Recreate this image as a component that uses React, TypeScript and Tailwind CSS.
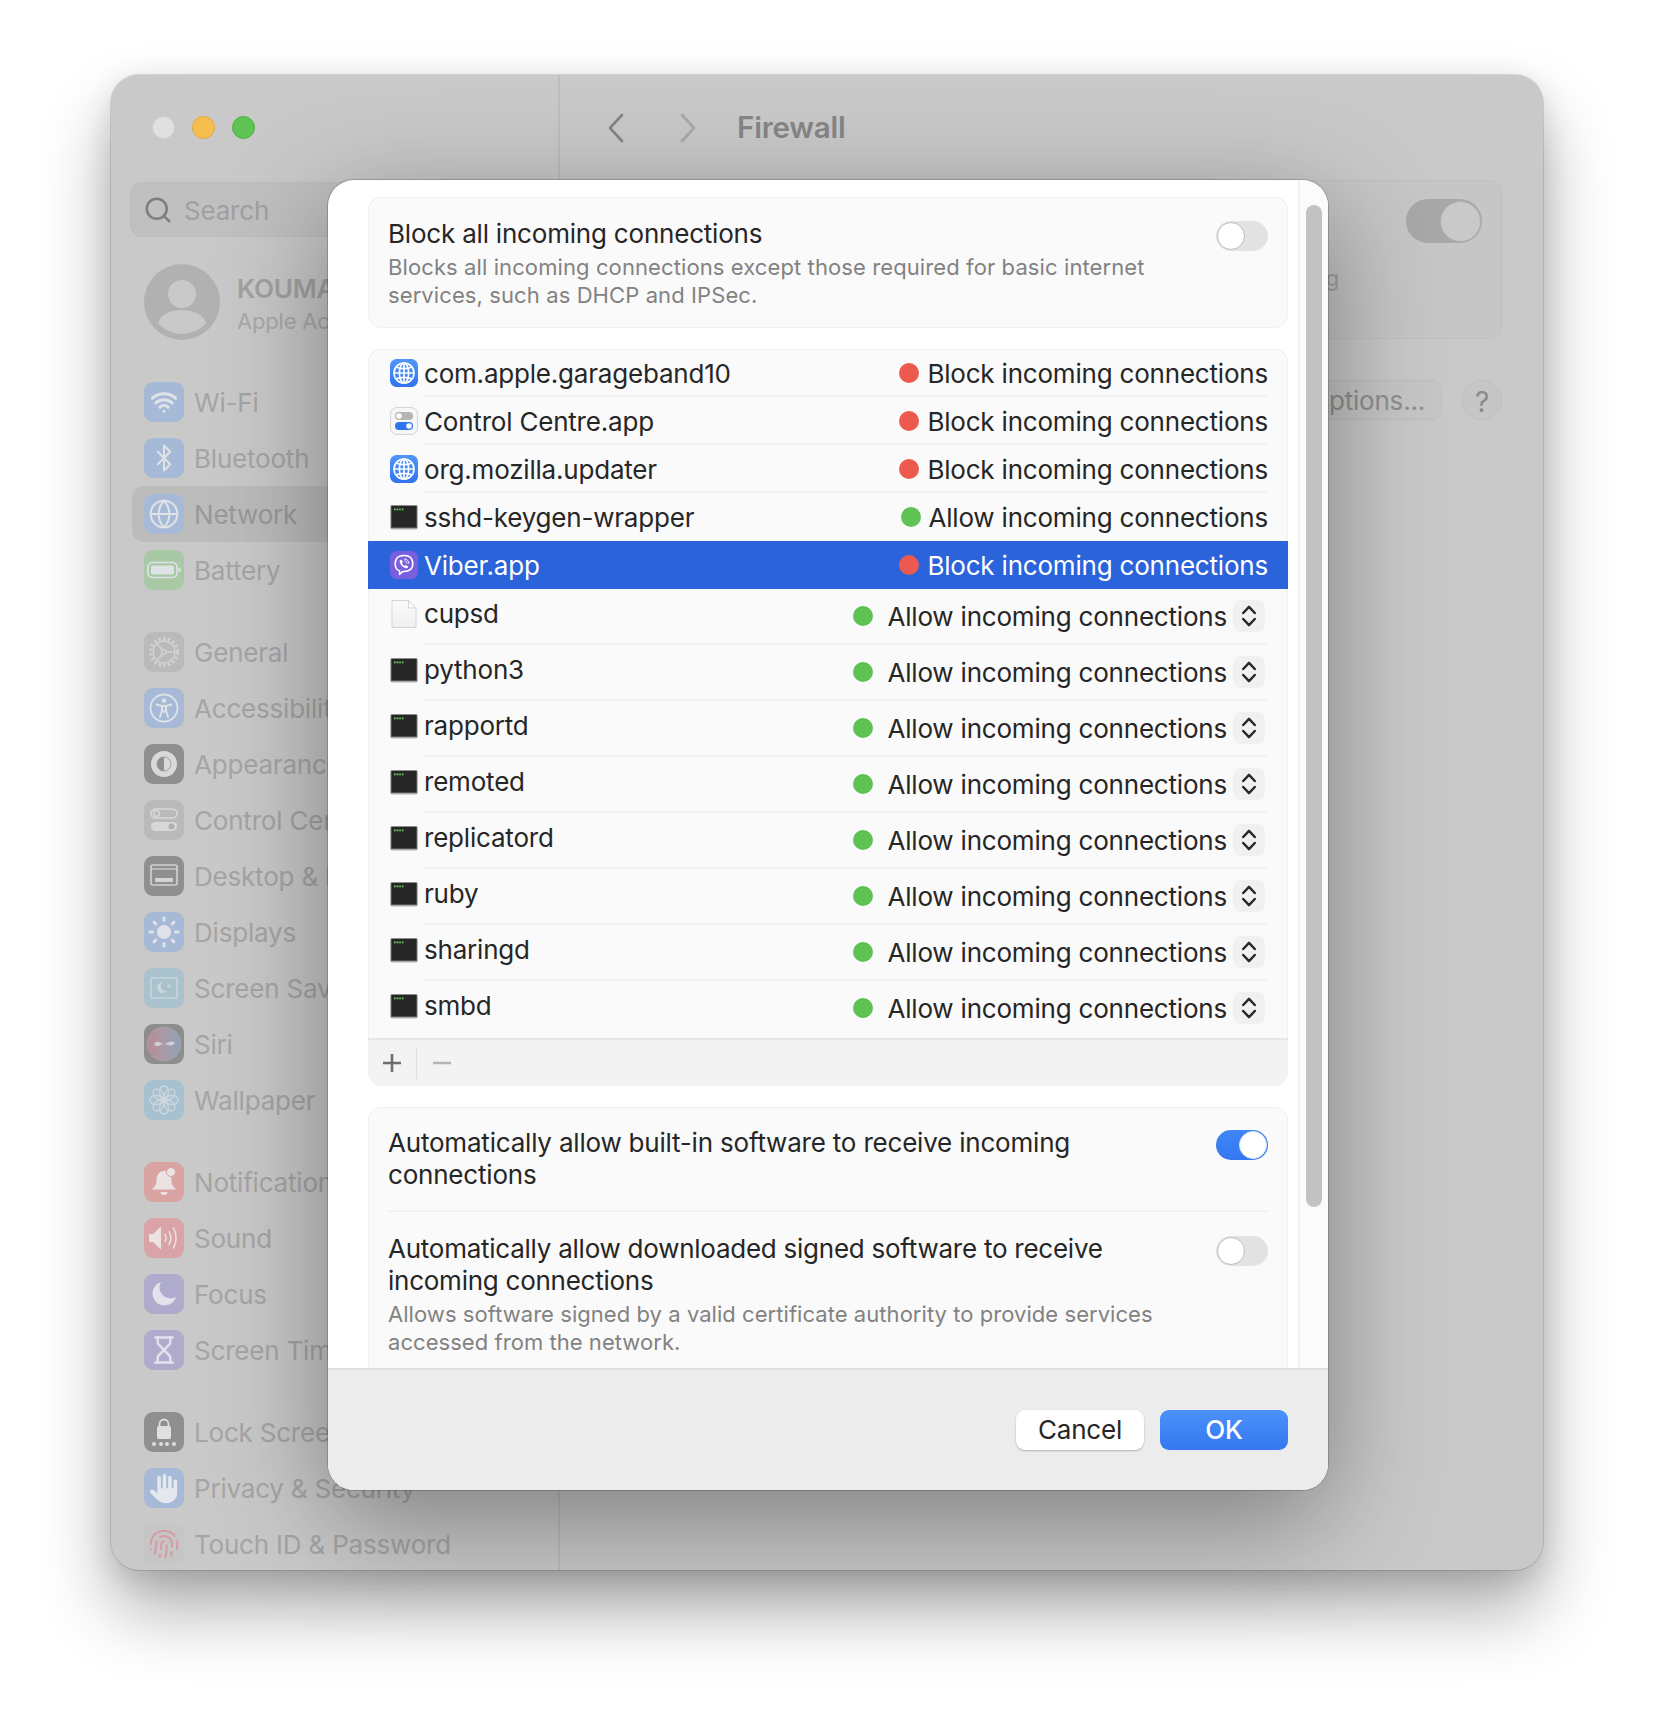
import React from 'react';
import { Bluetooth, Fingerprint, Globe, Hourglass, Search, Sun, Wifi } from 'lucide-react';
import { FaHand } from 'react-icons/fa6';

const AppGlobe: React.FC = () => (
  <svg width="28" height="28" viewBox="0 0 28 28">
    <defs>
      <linearGradient id="globe-bg" x1="0" y1="0" x2="0" y2="1">
        <stop offset="0" stopColor="#4f97f8" />
        <stop offset="1" stopColor="#2f74ee" />
      </linearGradient>
    </defs>
    <rect x="0" y="0" width="28" height="28" rx="6.5" fill="url(#globe-bg)" />
    <g fill="none" stroke="#fff" strokeWidth="1.700">
      <circle cx="14" cy="14" r="10" />
      <ellipse cx="14" cy="14" rx="4.600" ry="10" />
      <path d="M14 4v20" />
      <path d="M4 14h20" />
      <path d="M6 8c4 2.200 12 2.200 16 0" />
      <path d="M6 20c4-2.200 12-2.200 16 0" />
    </g>
  </svg>
);

const AppControl: React.FC = () => (
  <svg width="28" height="28" viewBox="0 0 28 28">
    <rect x="0.500" y="0.500" width="27" height="27" rx="6.500" fill="#f6f6f6" stroke="#d4d4d4" />
    <rect x="5" y="5" width="18" height="8" rx="4" fill="#b4b4b4" />
    <circle cx="9" cy="9" r="2.800" fill="#fff" />
    <rect x="5" y="15" width="18" height="8" rx="4" fill="#2f74ee" />
    <circle cx="19" cy="19" r="2.800" fill="#fff" />
  </svg>
);

const AppTerminal: React.FC = () => (
  <svg width="28" height="28" viewBox="0 0 28 28">
    <rect x="0.500" y="3" width="27" height="23.500" rx="1" fill="#b5b5b5" />
    <rect x="1" y="2.500" width="26" height="22.500" rx="0.500" fill="#262626" stroke="#8c8c8c" strokeWidth="0.800" />
    <rect x="4" y="5.500" width="1.600" height="1.800" fill="#6fd062" />
    <rect x="6.600" y="5.500" width="1.600" height="1.800" fill="#6fd062" />
    <rect x="9.200" y="5.500" width="1.600" height="1.800" fill="#6fd062" />
    <rect x="11.800" y="5.500" width="1.600" height="1.800" fill="#6fd062" />
  </svg>
);

const AppViber: React.FC = () => (
  <svg width="28" height="28" viewBox="0 0 28 28">
    <rect x="0" y="0" width="28" height="28" rx="6.5" fill="#7a5ee0" />
    <path d="M14 4.500c-5.600 0-8.800 2.400-8.800 8.200 0 4 1.500 6.200 4.400 7.300v3.400l3.300-3c6.600.3 9.900-2.400 9.900-7.700 0-5.800-3.200-8.200-8.800-8.200z" fill="none" stroke="#fff" strokeWidth="1.500" strokeLinejoin="round" />
    <path d="M10.600 8.800c-1 .5-1.200 1.500-.8 2.700 1 2.600 3 4.700 5.700 5.700 1.100.4 2.100 0 2.600-1 .2-.4 0-.7-.3-1l-1.500-1c-.4-.2-.7-.1-1 .2l-.5.6c-1.300-.6-2.300-1.600-2.900-2.900l.6-.5c.3-.3.4-.6.2-1l-1-1.500c-.2-.3-.6-.5-1.100-.3z" fill="#fff" />
    <path d="M14.500 8c2.500.1 4.300 1.900 4.400 4.500M14.800 10c1.300.1 2 .9 2.100 2.300" fill="none" stroke="#fff" strokeWidth="0.900" strokeLinecap="round" />
  </svg>
);

const AppDocument: React.FC = () => (
  <svg width="28" height="28" viewBox="0 0 28 28">
    <defs>
      <linearGradient id="doc-bg" x1="0" y1="0" x2="0" y2="1">
        <stop offset="0" stopColor="#fbfbfb" />
        <stop offset="1" stopColor="#efefef" />
      </linearGradient>
    </defs>
    <path d="M2 0.500h16.500L26 8v19.500H2z" fill="url(#doc-bg)" stroke="#d6d6d6" />
    <path d="M18.500 0.500V8H26z" fill="#ffffff" stroke="#d6d6d6" />
  </svg>
);

const Toggle: React.FC<{ on?: boolean }> = ({ on }) => (
  <div
    className={`w-[52px] h-[30px] rounded-full flex items-center p-px shrink-0 ${
      on ? 'justify-end bg-gradient-to-b from-[#3f86f7] to-[#3577f0]' : 'justify-start bg-[#e2e2e2]'
    }`}
  >
    <div className={`w-[28px] h-[28px] rounded-full bg-white ${on ? 'border border-[#d9e4f7]' : 'border border-[#bdbdbd]'}`} />
  </div>
);

const Stepper: React.FC = () => (
  <div className="w-[32px] h-[32px] rounded-lg bg-[#f0f0f0] flex items-center justify-center shrink-0">
    <svg width="16" height="24" viewBox="0 0 16 24" fill="none" stroke="#2a2a2a" strokeWidth="2.500" strokeLinecap="round" strokeLinejoin="round">
      <path d="M2.200 9 8 2.800 13.800 9" />
      <path d="M2.200 15 8 21.200 13.800 15" />
    </svg>
  </div>
);

const Dot: React.FC<{ tone: 'red' | 'green' }> = ({ tone }) => (
  <span className={`w-[20px] h-[20px] rounded-full shrink-0 ${tone === 'red' ? 'bg-[#ec5a4f]' : 'bg-[#5ec254]'}`} />
);

const topRows = [
  { name: 'com.apple.garageband10', icon: <AppGlobe />, allow: false },
  { name: 'Control Centre.app', icon: <AppControl />, allow: false },
  { name: 'org.mozilla.updater', icon: <AppGlobe />, allow: false },
  { name: 'sshd-keygen-wrapper', icon: <AppTerminal />, allow: true },
];

const pickerRows = ['cupsd', 'python3', 'rapportd', 'remoted', 'replicatord', 'ruby', 'sharingd', 'smbd'];

type SideItem = { label: string; bg: string; icon: React.ReactNode; active?: boolean };

const tint = '#dfe3e8';

const petals = [0, 45, 90, 135, 180, 225, 270, 315];

const sideGroups: SideItem[][] = [
  [
    { label: 'Wi-Fi', bg: 'bg-[#a6b9d6]', icon: <Wifi size={28} color={tint} strokeWidth={2.6} /> },
    { label: 'Bluetooth', bg: 'bg-[#a6b9d6]', icon: <Bluetooth size={30} color={tint} strokeWidth={1.6} /> },
    { label: 'Network', bg: 'bg-[#a6b9d6]', icon: <Globe size={32} color={tint} strokeWidth={1.5} />, active: true },
    {
      label: 'Battery', bg: 'bg-[#a9c9a6]', icon: (
        <svg width="34" height="18" viewBox="0 0 34 18" fill="none">
          <rect x="1" y="1.500" width="29" height="15" rx="4.500" stroke={tint} strokeWidth="1.600" />
          <rect x="4" y="4.500" width="23" height="9" rx="2" fill={tint} />
          <rect x="31.500" y="6.500" width="2" height="5" rx="1" fill={tint} />
        </svg>
      ),
    },
  ],
  [
    {
      label: 'General', bg: 'bg-[#bababa]', icon: (
        <svg width="32" height="32" viewBox="0 0 32 32" fill="none" stroke="#d2d2d2">
          <circle cx="16" cy="16" r="13.500" strokeWidth="3" strokeDasharray="2.400 2.400" />
          <circle cx="16" cy="16" r="11" strokeWidth="1.400" />
          <circle cx="16" cy="16" r="2.200" strokeWidth="1.400" />
          <path d="M14.500 14.500 9 7M18.300 16H27M14.500 17.500 9 25" strokeWidth="1.400" />
        </svg>
      ),
    },
    {
      label: 'Accessibility', bg: 'bg-[#a6b9d6]', icon: (
        <svg width="30" height="30" viewBox="0 0 30 30" fill="none" stroke={tint}>
          <circle cx="15" cy="15" r="13.500" strokeWidth="1.800" />
          <circle cx="15" cy="7.500" r="2.200" fill={tint} stroke="none" />
          <path d="M7.500 11.500 13 13v4.500L11 24M22.500 11.500 17 13v4.500L19 24M13 13h4M15 18v1" strokeWidth="2" strokeLinecap="round" strokeLinejoin="round" />
        </svg>
      ),
    },
    {
      label: 'Appearance', bg: 'bg-[#8f8f8f]', icon: (
        <svg width="28" height="28" viewBox="0 0 28 28">
          <circle cx="14" cy="14" r="13" fill="#d9d9d9" />
          <path d="M14 7a7 7 0 0 0 0 14z" fill="#8f8f8f" />
          <path d="M14 7a7 7 0 0 1 0 14z" fill="#d9d9d9" />
          <circle cx="14" cy="14" r="7" fill="none" stroke="#8f8f8f" strokeWidth="0.800" />
        </svg>
      ),
    },
    {
      label: 'Control Centre', bg: 'bg-[#bababa]', icon: (
        <svg width="28" height="26" viewBox="0 0 28 26" fill="none">
          <rect x="1" y="2" width="26" height="9" rx="4.500" stroke="#d8d8d8" strokeWidth="1.600" />
          <circle cx="6.500" cy="6.500" r="3" stroke="#d8d8d8" strokeWidth="1.400" />
          <rect x="1" y="15" width="26" height="9" rx="4.500" fill="#d8d8d8" />
          <circle cx="21.500" cy="19.500" r="3" fill="#b0b0b0" />
        </svg>
      ),
    },
    {
      label: 'Desktop & Dock', bg: 'bg-[#8f8f8f]', icon: (
        <svg width="28" height="24" viewBox="0 0 28 24" fill="none">
          <rect x="1" y="1" width="26" height="20" rx="2" stroke="#d2d2d2" strokeWidth="1.600" />
          <path d="M1 5h26" stroke="#d2d2d2" strokeWidth="1.200" />
          <rect x="5" y="14" width="18" height="4" fill="#d2d2d2" />
        </svg>
      ),
    },
    { label: 'Displays', bg: 'bg-[#a6b9d6]', icon: <Sun size={34} color={tint} fill={tint} strokeWidth={2} /> },
    {
      label: 'Screen Saver', bg: 'bg-[#a9c2cd]', icon: (
        <svg width="28" height="22" viewBox="0 0 28 22" fill="none">
          <rect x="1" y="1" width="26" height="20" stroke="#cdd7dc" strokeWidth="1.400" />
          <path d="M13 5a5.500 5.500 0 1 0 4 9 5 5 0 0 1-4-9z" fill="#cdd7dc" />
          <path d="M19 7v4M17 9h4" stroke="#cdd7dc" strokeWidth="1" />
        </svg>
      ),
    },
    {
      label: 'Siri', bg: 'bg-[#8d8d8d]', icon: (
        <svg width="36" height="36" viewBox="0 0 36 36">
          <defs>
            <linearGradient id="siri-glow" x1="0" y1="0" x2="1" y2="0">
              <stop offset="0" stopColor="#b98a98" />
              <stop offset="0.500" stopColor="#a99aa8" />
              <stop offset="1" stopColor="#8ea2b8" />
            </linearGradient>
          </defs>
          <circle cx="18" cy="18" r="17" fill="url(#siri-glow)" stroke="#a5a5a5" strokeWidth="0.800" />
          <path d="M8 18c4-5 7 0 10 0s6-5 11-1c-4 5-7 1-11 1s-6 5-10 0z" fill="#d9dde2" opacity="0.800" />
        </svg>
      ),
    },
    {
      label: 'Wallpaper', bg: 'bg-[#a8c1d0]', icon: (
        <svg width="32" height="32" viewBox="0 0 32 32" fill="none" stroke="#cdd8de" strokeWidth="1.300">
          {petals.map((deg) => (
            <ellipse key={deg} cx="16" cy="8" rx="4.500" ry="6" transform={`rotate(${deg} 16 16)`} />
          ))}
          <circle cx="16" cy="16" r="2" fill="#cdd8de" />
        </svg>
      ),
    },
  ],
  [
    {
      label: 'Notifications', bg: 'bg-[#d9a3a2]', icon: (
        <svg width="32" height="32" viewBox="0 0 32 32">
          <path d="M16 5c-5 0-7.500 4-7.500 9 0 4.500-1.500 6.500-4 8.500v1h23v-1c-2.500-2-4-4-4-8.500 0-5-2.500-9-7.500-9z" fill="#ece2e2" />
          <path d="M12.500 26a3.500 3 0 0 0 7 0z" fill="#ece2e2" />
          <circle cx="23" cy="6" r="4.500" fill="#ece2e2" stroke="#d9a3a2" strokeWidth="1" />
        </svg>
      ),
    },
    {
      label: 'Sound', bg: 'bg-[#d9a3a8]', icon: (
        <svg width="32" height="26" viewBox="0 0 32 26" fill="none" stroke="#ece2e2" strokeWidth="1.500" strokeLinecap="round">
          <path d="M1 9h4l8-7.500v23L5 17H1z" fill="#ece2e2" stroke="none" />
          <path d="M17 9.500c1.300 2 1.300 5 0 7M21 6.500c2.300 4 2.300 9 0 13M25.500 3c3.500 6 3.500 14 0 20" />
        </svg>
      ),
    },
    {
      label: 'Focus', bg: 'bg-[#aeabcc]', icon: (
        <svg width="28" height="28" viewBox="0 0 28 28">
          <path d="M11 2a12 12 0 1 0 15 15A11 11 0 0 1 11 2z" fill="#e2e1ec" />
        </svg>
      ),
    },
    { label: 'Screen Time', bg: 'bg-[#aeabcc]', icon: <Hourglass size={30} color="#e2e1ec" strokeWidth={2} /> },
  ],
  [
    {
      label: 'Lock Screen', bg: 'bg-[#8f8f8f]', icon: (
        <svg width="30" height="32" viewBox="0 0 30 32">
          <path d="M10.500 11V8a4.500 4.500 0 0 1 9 0v3" fill="none" stroke="#e0e0e0" strokeWidth="1.800" />
          <rect x="8" y="10" width="14" height="13" rx="2" fill="#e0e0e0" />
          <circle cx="5" cy="28" r="2" fill="#e0e0e0" />
          <circle cx="12" cy="28" r="2" fill="#e0e0e0" />
          <circle cx="18" cy="28" r="2" fill="#e0e0e0" />
          <circle cx="25" cy="28" r="2" fill="#e0e0e0" />
        </svg>
      ),
    },
    { label: 'Privacy & Security', bg: 'bg-[#a6b9d6]', icon: <FaHand size={29} color="#e4e8ee" /> },
    { label: 'Touch ID & Password', bg: 'bg-[#c6c6c6]', icon: <Fingerprint size={32} color="#d69aa3" strokeWidth={1.5} /> },
  ],
];

const Sidebar: React.FC = () => (
  <aside className="w-[449px] shrink-0 border-r-2 border-[#bdbdbd] pl-[19px] pt-[41px]">
    <div className="flex items-center gap-[17px] pl-[22px]">
      <span className="w-[23px] h-[23px] rounded-full bg-[#e0e0e0] border border-[#d0d0d0]" />
      <span className="w-[23px] h-[23px] rounded-full bg-[#f6be4f] border border-[#e3a93c]" />
      <span className="w-[23px] h-[23px] rounded-full bg-[#5fc453] border border-[#4eae44]" />
    </div>
    <div className="mt-[43px] h-[55px] w-[400px] rounded-xl bg-[#c0c0c0] border border-[#bcbcbc] flex items-center pl-[12px] gap-[11px]">
      <Search size={30} color="#7e7e7e" strokeWidth={2} />
      <span className="pt-[2px] text-[26px] text-[#a0a0a0]">Search</span>
    </div>
    <div className="mt-[27px] h-[76px] flex items-center pl-[14px] gap-[17px]">
      <svg width="76" height="76" viewBox="0 0 76 76">
        <circle cx="38" cy="38" r="38" fill="#b1b1b1" />
        <circle cx="38" cy="30" r="14" fill="#c9c9c9" />
        <path d="M14 59c4-10 14-13 24-13s20 3 24 13c-6 7-15 11-24 11s-18-4-24-11z" fill="#c9c9c9" />
      </svg>
      <div className="pt-[5px]">
        <div className="text-[26px] leading-[32px] font-semibold text-[#a2a2a2]">KOUMA</div>
        <div className="text-[22px] leading-[32px] text-[#aaaaaa]">Apple Account</div>
      </div>
    </div>
    <nav className="mt-[34px]">
      {sideGroups.map((group, i) => (
        <div key={i} className={i > 0 ? 'mt-[26px]' : ''}>
          {group.map((item) => (
            <div
              key={item.label}
              className={`h-[56px] flex items-center pl-[12px] gap-[10px] rounded-xl w-[420px] ml-[2px] ${item.active ? 'bg-[#bcbcbc]' : ''}`}
            >
              <span className={`w-[40px] h-[40px] rounded-[9px] flex items-center justify-center ${item.bg}`}>{item.icon}</span>
              <span className={`text-[26px] whitespace-nowrap ${item.active ? 'text-[#999999]' : 'text-[#a5a5a5]'}`}>{item.label}</span>
            </div>
          ))}
        </div>
      ))}
    </nav>
  </aside>
);

const MainPane: React.FC = () => (
  <main className="flex-1 pl-[40px] pr-[41px]">
    <header className="h-[105px] flex items-center">
      <svg width="18" height="30" viewBox="0 0 18 30" fill="none" stroke="#858585" strokeWidth="2.600" strokeLinecap="round" strokeLinejoin="round" className="ml-[7px]">
        <path d="M15 2 3 15l12 13" />
      </svg>
      <svg width="18" height="30" viewBox="0 0 18 30" fill="none" stroke="#a8a8a8" strokeWidth="2.600" strokeLinecap="round" strokeLinejoin="round" className="ml-[54px]">
        <path d="M3 2l12 13L3 28" />
      </svg>
      <h1 className="ml-[40px] pb-px text-[29.500px] font-semibold text-[#868686]">Firewall</h1>
    </header>
    <section className="h-[159px] rounded-xl border border-[#c0c0c0] bg-[#c6c6c6] relative">
      <div className="absolute right-[19px] top-[18px] w-[76px] h-[44px] rounded-full bg-[#a8a8a8] flex justify-end items-center pr-px">
        <span className="w-[41px] h-[41px] rounded-full bg-[#c9c9c9] border border-[#b0b0b0]" />
      </div>
      <p className="absolute right-[162px] top-[83px] text-[22px] leading-[28px] text-[#a2a2a2]">accepting</p>
    </section>
    <div className="mt-[41px] flex justify-end items-center gap-[20px]">
      <button className="h-[40px] pl-[17px] pr-[16px] pb-[2px] rounded-[10px] bg-[#c6c6c6] border border-[#bfbfbf] text-[26px] text-[#8f8f8f]">Options...</button>
      <button className="w-[40px] h-[40px] rounded-full bg-[#c6c6c6] border border-[#bfbfbf] text-[28px] text-[#8a8a8a]">?</button>
    </div>
  </main>
);

const Dialog: React.FC = () => (
  <div className="absolute left-[217px] top-[105px] w-[1000px] h-[1310px] rounded-[26px] overflow-hidden flex flex-col bg-white shadow-[0_0_0_1px_rgba(0,0,0,0.18)]">
    <div className="flex-1 min-h-0 flex overflow-hidden">
      <div className="flex-1 min-w-0 pl-[40px] pr-[10px] pt-[17px]">
        <section className="h-[131px] rounded-[14px] bg-[#fafafa] shadow-[inset_0_0_0_1px_#f0f0f0] pl-[20px] pr-[20px] pt-[21px] flex justify-between">
          <div>
            <div className="text-[26px] leading-[32px] text-[#262626]">Block all incoming connections</div>
            <p className="mt-[3px] text-[22px] leading-[28px] tracking-[0.1px] text-[#828282] w-[800px]">
              Blocks all incoming connections except those required for basic internet services, such as DHCP and IPSec.
            </p>
          </div>
          <div className="pt-[3px]"><Toggle /></div>
        </section>

        <section className="mt-[21px] rounded-[14px] overflow-hidden bg-[#fafafa] shadow-[inset_0_0_0_1px_#f0f0f0]">
          {topRows.map((row, i) => (
            <div key={row.name} className="h-[48px] flex items-center pl-[22px] pr-[20px]">
              <span className="w-[28px] h-[28px] mr-[6px] shrink-0">{row.icon}</span>
              <div className={`flex-1 h-full flex items-center justify-between ${i < 3 ? 'shadow-[inset_0_-2px_0_#f2f2f2]' : ''}`}>
                <span className="text-[26px] text-[#262626]">{row.name}</span>
                <span className="flex items-center gap-[8px]">
                  <Dot tone={row.allow ? 'green' : 'red'} />
                  <span className="text-[26px] text-[#262626]">{row.allow ? 'Allow' : 'Block'} incoming connections</span>
                </span>
              </div>
            </div>
          ))}
          <div className="h-[48px] flex items-center pl-[22px] pr-[20px] bg-[#2b63db]">
            <span className="w-[28px] h-[28px] mr-[6px] shrink-0"><AppViber /></span>
            <div className="flex-1 flex items-center justify-between">
              <span className="text-[26px] text-white">Viber.app</span>
              <span className="flex items-center gap-[8px]">
                <Dot tone="red" />
                <span className="text-[26px] text-white">Block incoming connections</span>
              </span>
            </div>
          </div>
          {pickerRows.map((name, i) => (
            <div key={name} className="h-[56px] flex items-center pl-[22px] pr-[20px]">
              <span className="w-[28px] h-[28px] mr-[6px] mb-[6px] shrink-0">{name === 'cupsd' ? <AppDocument /> : <AppTerminal />}</span>
              <div className={`flex-1 h-full flex items-center justify-between pr-[3px] border-b-2 ${i < 7 ? 'border-[#f2f2f2]' : 'border-transparent'}`}>
                <span className="text-[26px] text-[#262626] pb-[5px]">{name}</span>
                <span className="flex items-center">
                  <Dot tone="green" />
                  <span className="ml-[15px] mr-[6px] text-[26px] text-[#262626]">Allow incoming connections</span>
                  <Stepper />
                </span>
              </div>
            </div>
          ))}
          <div className="h-[48px] mt-px bg-[#f3f3f3] border-t-2 border-[#e6e6e6] flex items-center pl-[12px]">
            <svg width="24" height="24" viewBox="0 0 24 24" stroke="#6e6e6e" strokeWidth="2.600" fill="none">
              <path d="M12 3v18M3 12h18" />
            </svg>
            <span className="ml-[12px] w-px h-[32px] bg-[#dedede]" />
            <svg className="ml-[13px]" width="24" height="24" viewBox="0 0 24 24" stroke="#b5b5b5" strokeWidth="2.600" fill="none">
              <path d="M3 12h18" />
            </svg>
          </div>
        </section>

        <section className="mt-[21px] h-[400px] rounded-[14px] bg-[#fafafa] shadow-[inset_0_0_0_1px_#f0f0f0] pl-[20px] pr-[20px]">
          <div className="h-[105px] pt-[20px] flex justify-between border-b-2 border-[#f2f2f2]">
            <p className="text-[26px] leading-[32px] text-[#262626] w-[700px]">Automatically allow built-in software to receive incoming connections</p>
            <div className="pt-[3px]"><Toggle on /></div>
          </div>
          <div className="pt-[21px] flex justify-between">
            <div className="w-[790px]">
              <p className="text-[26px] leading-[32px] tracking-[-0.25px] text-[#262626] w-[740px]">Automatically allow downloaded signed software to receive incoming connections</p>
              <p className="mt-[3px] text-[22px] leading-[28px] tracking-[0.05px] text-[#828282]">Allows software signed by a valid certificate authority to provide services accessed from the network.</p>
            </div>
            <div className="pt-[3px]"><Toggle /></div>
          </div>
        </section>
      </div>
      <div className="w-[30px] shrink-0 border-l-2 border-[#f2f2f2] bg-[#fbfbfb] pl-[6px] pt-[25px]">
        <div className="w-[16px] h-[1002px] rounded-full bg-[#c2c2c2]" />
      </div>
    </div>
    <footer className="h-[122px] shrink-0 bg-[#ececec] border-t-2 border-[#e0e0e0] flex items-center justify-end gap-[16px] pr-[40px]">
      <button className="w-[128px] h-[40px] pb-[3px] rounded-[9px] bg-white shadow-[0_1px_2px_rgba(0,0,0,0.25)] text-[26px] text-[#262626]">Cancel</button>
      <button className="w-[128px] h-[40px] pb-[3px] rounded-[9px] bg-gradient-to-b from-[#4b91fa] to-[#3577f0] text-[26px] font-medium text-white">OK</button>
    </footer>
  </div>
);

export default function App() {
  return (
    <div className="w-[1654px] h-[1718px] bg-white pl-[111px] pt-[75px] overflow-hidden tracking-[-0.2px] font-['Inter','Liberation_Sans',sans-serif]">
      <div className="relative w-[1432px] h-[1495px] rounded-[28px] flex bg-[#c9c9c9] shadow-[0_0_0_1px_rgba(0,0,0,0.12),0_40px_70px_rgba(0,0,0,0.32),0_8px_30px_rgba(0,0,0,0.12)]">
        <Sidebar />
        <MainPane />
        <div className="absolute left-[217px] top-[105px] w-[1000px] h-[1310px] rounded-[26px] shadow-[0_30px_110px_rgba(0,0,0,0.38)]" />
        <Dialog />
      </div>
    </div>
  );
}
